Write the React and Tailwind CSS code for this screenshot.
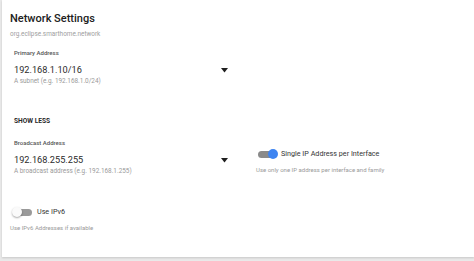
import React from "react";

function Caret() {
  return (
    <svg width="7" height="5" viewBox="0 0 7 5" className="flex-none">
      <path d="M0 0 H7 L3.5 4.5 Z" fill="#1f1f1f" />
    </svg>
  );
}

function Toggle({ on }) {
  return (
    <div className="relative w-[20px] h-[10px] flex-none">
      <div className={`absolute left-[1px] right-[1px] top-[2px] h-[7px] rounded-full ${on ? "bg-[#8a8a8a]" : "bg-[#9a9a9a]"}`} />
      <div
        className={`absolute top-0 w-[10px] h-[10px] rounded-full ${
          on ? "right-[-1px] bg-[#3d84f1]" : "left-[-1px] bg-[#fafafa] shadow-[0_1px_2px_rgba(0,0,0,0.35)]"
        }`}
      />
    </div>
  );
}

function SelectField({ label, value, hint }) {
  return (
    <div className="pl-[4px] w-[218px]">
      <p className="text-[6px] leading-[8px] font-medium text-[#555]">{label}</p>
      <div className="mt-[7px] flex items-center justify-between h-[12px]">
        <span className="text-[9.2px] leading-[12px] text-[#2b2b2b]">{value}</span>
        <Caret />
      </div>
      <p className="mt-[1px] text-[6.4px] leading-[8px] text-[#9a9a9a]">{hint}</p>
    </div>
  );
}

export default function App() {
  return (
    <div className="w-[474px] h-[261px] bg-[#e9e9e9] overflow-hidden" style={{ fontFamily: "Roboto, 'Liberation Sans', sans-serif" }}>
      <div className="ml-[2px] h-[257px] bg-white shadow-[0_1px_2px_rgba(0,0,0,0.15)] px-[8px] pt-[12px]">
        {/* Header */}
        <h1 className="text-[11px] leading-[14px] font-medium text-[#212121]">Network Settings</h1>
        <p className="mt-[4px] text-[6.4px] leading-[8px] text-[#9e9e9e]">org.eclipse.smarthome.network</p>

        {/* Primary address */}
        <div className="mt-[11px]">
          <SelectField label="Primary Address" value="192.168.1.10/16" hint="A subnet (e.g. 192.168.1.0/24)" />
        </div>

        <p className="mt-[32px] pl-[4px] text-[6.6px] leading-[8px] font-bold text-[#2a2a2a]">SHOW LESS</p>

        {/* Advanced */}
        <div className="mt-[14px] flex">
          <div className="w-[246px]">
            <SelectField label="Broadcast Address" value="192.168.255.255" hint="A broadcast address (e.g. 192.168.1.255)" />
          </div>
          <div className="pt-[10px]">
            <div className="flex items-center gap-[4px] h-[10px] pl-[1px]">
              <Toggle on />
              <span className="text-[7.2px] leading-[10px] text-[#333]">Single IP Address per Interface</span>
            </div>
            <p className="mt-[7px] text-[6px] leading-[8px] text-[#9a9a9a]">Use only one IP address per interface and family</p>
          </div>
        </div>

        <div className="mt-[32px] flex items-center gap-[4px] h-[10px] pl-[3px]">
          <Toggle />
          <span className="text-[7.2px] leading-[10px] text-[#333]">Use IPv6</span>
        </div>
        <p className="mt-[7px] text-[6px] leading-[8px] text-[#9a9a9a]">Use IPv6 Addresses if available</p>
      </div>
    </div>
  );
}
